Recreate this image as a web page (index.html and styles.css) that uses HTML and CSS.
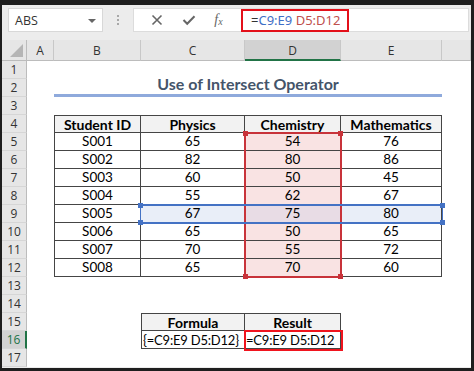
FILE: index.html
```html
<!DOCTYPE html>
<html>
<head>
<meta charset="utf-8">
<link rel="stylesheet" href="styles.css">
</head>
<body>
<div class="frame">
  <div class="window">
    <div class="fbar">
      <div class="namebox"><span class="nb-text">ABS</span><span class="nb-arrow"></span></div>
      <div class="dots"><i></i><i></i><i></i></div>
      <div class="inputbox">
        <div class="icons">
          <svg class="ic" width="12" height="12" viewBox="0 0 12 12"><path d="M1.5 1.5 L10.5 10.5 M10.5 1.5 L1.5 10.5" stroke="#666" stroke-width="1.6" fill="none"/></svg>
          <svg class="ic" width="14" height="12" viewBox="0 0 14 12"><path d="M1.5 6 L5.2 9.8 L12.5 2.2" stroke="#666" stroke-width="2" fill="none"/></svg>
          <span class="fx">f<sub>x</sub></span>
        </div>
        <div class="formula"><span class="ftext"><span class="f-eq">=</span><span class="f-blue">C9:E9</span> <span class="f-red">D5:D12</span></span></div>
      </div>
    </div>
    <div class="sheet">
      <div class="corner"><span class="tri"></span></div>
      <div class="colh">A</div>
      <div class="colh">B</div>
      <div class="colh">C</div>
      <div class="colh active">D</div>
      <div class="colh">E</div>
      <div class="colh"></div>

      <div class="rowh">1</div>
      <div class="rowh">2</div>
      <div class="rowh">3</div>
      <div class="rowh">4</div>
      <div class="rowh">5</div>
      <div class="rowh">6</div>
      <div class="rowh">7</div>
      <div class="rowh">8</div>
      <div class="rowh">9</div>
      <div class="rowh">10</div>
      <div class="rowh">11</div>
      <div class="rowh">12</div>
      <div class="rowh">13</div>
      <div class="rowh">14</div>
      <div class="rowh">15</div>
      <div class="rowh active">16</div>
      <div class="rowh">17</div>

      <div class="title">Use of Intersect Operator</div>

      <div class="dtable">
        <div class="c h">Student ID</div><div class="c h">Physics</div><div class="c h">Chemistry</div><div class="c h">Mathematics</div>
        <div class="c">S001</div><div class="c">65</div><div class="c pk">54</div><div class="c">76</div>
        <div class="c">S002</div><div class="c">82</div><div class="c pk">80</div><div class="c">86</div>
        <div class="c">S003</div><div class="c">60</div><div class="c pk">50</div><div class="c">45</div>
        <div class="c">S004</div><div class="c">55</div><div class="c pk">62</div><div class="c">67</div>
        <div class="c">S005</div><div class="c bl">67</div><div class="c mix">75</div><div class="c bl">80</div>
        <div class="c">S006</div><div class="c">65</div><div class="c pk">50</div><div class="c">65</div>
        <div class="c">S007</div><div class="c">70</div><div class="c pk">55</div><div class="c">72</div>
        <div class="c">S008</div><div class="c">65</div><div class="c pk">70</div><div class="c">60</div>
        <div class="range red"><i class="hd tl"></i><i class="hd tr"></i><i class="hd bl2"></i><i class="hd br"></i></div>
        <div class="range blue"><i class="hd tl"></i><i class="hd tr"></i><i class="hd bl2"></i><i class="hd br"></i></div>
      </div>

      <div class="ftable">
        <div class="c h">Formula</div><div class="c h">Result</div>
        <div class="c left">{=C9:E9 D5:D12}</div><div class="c left res">=C9:E9 D5:D12</div>
        <div class="redbox"></div>
      </div>
    </div>
  </div>
</div>
</body>
</html>
```
FILE: styles.css
```css
* { box-sizing: border-box; }
html, body { margin: 0; padding: 0; }
body { background: #1e1e1e; width: 474px; height: 371px; overflow: hidden; }

.frame { padding: 5px 3px 3px 2px; width: 474px; height: 371px; }
.window { background: #ececec; width: 469px; height: 363px; overflow: hidden; }

.fbar { display: flex; align-items: stretch; height: 35px; padding: 3px 2px 8px 6px; }
.namebox { width: 95px; background: #fff; border: 1px solid #d8d8d8; display: flex; align-items: center; justify-content: space-between; padding: 0 6px 0 6px; font-family: "Open Sans", sans-serif; font-size: 12.5px; color: #333; }
.nb-arrow { width: 0; height: 0; border-left: 4px solid transparent; border-right: 4px solid transparent; border-top: 4px solid #666; margin-top: 1px; }
.dots { width: 30px; display: flex; flex-direction: column; align-items: center; justify-content: center; gap: 2px; }
.dots i { width: 2px; height: 2px; background: #a8a8a8; display: block; }
.inputbox { flex: 1; background: #fff; border: 1px solid #dcdcdc; display: flex; align-items: center; }
.icons { width: 104px; display: flex; align-items: center; justify-content: space-around; padding: 0 6px 0 8px; }
.ic { display: block; }
.fx { font-family: "Liberation Serif", serif; font-style: italic; color: #666; font-size: 14px; }
.fx sub { font-size: 10px; vertical-align: -1px; }
.formula { margin-left: 3px; height: 23px; width: 108px; border: 2px solid #e3101a; display: flex; align-items: center; padding-left: 8px; font-family: "Noto Sans", sans-serif; font-size: 13px; white-space: pre; }
.f-eq { color: #333; }
.f-blue { color: #3f6fc6; }
.f-red { color: #c0504d; }

.sheet { display: grid; grid-template-columns: 25px 27px 87px 104px 96px 101px 29px; grid-template-rows: 21px repeat(17, 18px); background: #fff; font-family: "Lato", sans-serif; color: #000; }
.corner { grid-row: 1; grid-column: 1; background: #e6e6e6; border-right: 1px solid #bcbcbc; border-bottom: 1px solid #bcbcbc; position: relative; }
.tri { position: absolute; right: 3px; bottom: 3px; width: 0; height: 0; border-left: 13px solid transparent; border-bottom: 13px solid #b5b5b5; }
.colh { grid-row: 1; background: #e6e6e6; border-right: 1px solid #c8c8c8; border-bottom: 1px solid #bcbcbc; display: flex; align-items: center; justify-content: center; font-family: "Open Sans", sans-serif; font-size: 12px; color: #333; padding-top: 1px; }
.colh.active { background: #d2d2d2; border-bottom: 2px solid #217346; }
.rowh { grid-column: 1; background: #e6e6e6; border-right: 1px solid #bcbcbc; border-bottom: 1px solid #d6d6d6; display: flex; align-items: center; justify-content: center; font-family: "Open Sans", sans-serif; font-size: 12px; color: #333; }
.rowh.active { background: #d2d2d2; color: #217346; border-right: 2px solid #217346; }

.title { grid-row: 3; grid-column: 3 / 7; border-bottom: 3px solid #8faadc; display: flex; align-items: flex-end; justify-content: center; font-weight: 700; font-size: 16px; color: #44546a; padding-bottom: 1px; }

.dtable { grid-row: 5 / 14; grid-column: 3 / 7; display: grid; grid-template-columns: 87px 104px 96px 101px; grid-template-rows: repeat(9, 18px); position: relative; }
.ftable { grid-row: 16 / 18; grid-column: 4 / 6; display: grid; grid-template-columns: 104px 96px; grid-template-rows: 18px 18px; position: relative; }

.c { border-right: 1px solid #454545; border-bottom: 1px solid #454545; display: flex; align-items: center; justify-content: center; font-size: 13.5px; line-height: 1; padding-top: 1px; white-space: nowrap; overflow: visible; }
.dtable > .c:nth-child(4n+1) { border-left: 1px solid #454545; }
.dtable > .c:nth-child(-n+4) { border-top: 1px solid #454545; }
.ftable > .c:nth-child(2n+1) { border-left: 1px solid #454545; }
.ftable > .c:nth-child(-n+2) { border-top: 1px solid #454545; }
.c.h { background: #f2f2f2; font-weight: 700; font-size: 14px; }
.c.left { justify-content: flex-start; padding-left: 1px; font-size: 13px; letter-spacing: -0.2px; }
.c.pk { background: #f9e3e3; }
.c.bl { background: #e9eef8; }
.c.mix { background: #e8dce5; }

.range { position: absolute; }
.range.red { left: 190px; top: 17px; width: 98px; height: 146px; border: 2px solid #c8333a; }
.range.blue { left: 86px; top: 89px; width: 303px; height: 20px; border: 2px solid #4472c4; border-left-width: 1px; border-right-width: 1px; }
.hd { position: absolute; width: 5px; height: 5px; display: block; }
.red .hd { background: #c8333a; }
.blue .hd { background: #4472c4; }
.hd.tl { left: -3px; top: -3px; }
.hd.tr { right: -3px; top: -3px; }
.hd.bl2 { left: -3px; bottom: -3px; }
.hd.br { right: -3px; bottom: -3px; }

.redbox { position: absolute; left: 103px; top: 17px; width: 99px; height: 21px; border: 2px solid #f0141e; }
```
